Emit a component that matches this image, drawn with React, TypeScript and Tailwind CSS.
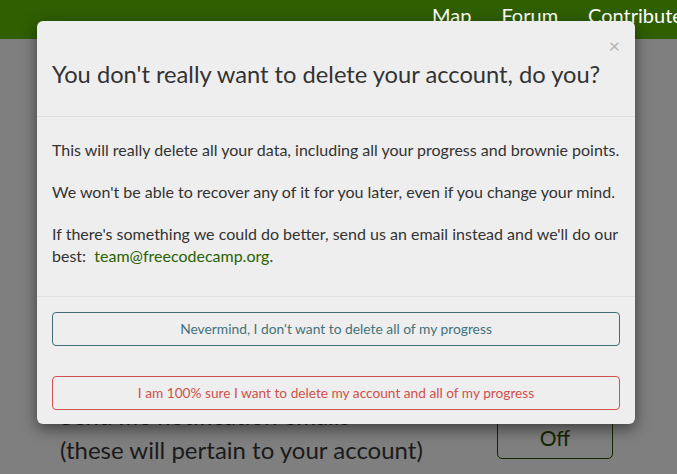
import React from 'react';

const lato = { fontFamily: 'Lato, "Open Sans", sans-serif' };

function NavBar() {
  return (
    <div className="h-[39px] bg-[#2f5f00] overflow-hidden">
      <nav className="flex gap-[30px] pl-[432px] pt-[1px] text-[20px] leading-[28px] text-white whitespace-nowrap">
        <span>Map</span>
        <span>Forum</span>
        <span>Contribute</span>
      </nav>
    </div>
  );
}

function Backdrop() {
  return (
    <div className="flex items-start justify-between pl-[60px] pr-[64px] pt-[360px]">
      <div className="text-[24px] leading-[34px] text-[#1a1a1a]">
        <p>Send me notification emails</p>
        <p>(these will pertain to your account)</p>
      </div>
      <button className="w-[116px] h-[42px] mt-[18px] border border-[#142600] rounded-[5px] text-[21px] text-[#142600]">
        Off
      </button>
    </div>
  );
}

function DeleteModal() {
  return (
    <div className="absolute left-[37px] top-[21px] w-[598px] bg-[#eeeeee] rounded-[6px] shadow-[0_5px_15px_rgba(0,0,0,0.5)] text-[#333]">
      <div className="relative h-[96px] border-b border-[#e0e0e0] px-[15px] pt-[38px]">
        <span className="absolute right-[15px] top-[14px] text-[20px] leading-none text-[#b5b5b5]">×</span>
        <h3 className="text-[23.7px] leading-[30px] font-normal">
          You don't really want to delete your account, do you?
        </h3>
      </div>
      <div className="px-[15px] pt-[22px] pb-[29px] text-[16px] leading-[22px] space-y-[20px]">
        <p>This will really delete all your data, including all your progress and brownie points.</p>
        <p>We won't be able to recover any of it for you later, even if you change your mind.</p>
        <p>
          If there's something we could do better, send us an email instead and we'll do our best:{'\u00a0 '}
          <a className="text-[#2a6200]">team@freecodecamp.org</a>.
        </p>
      </div>
      <div className="border-t border-[#e0e0e0] px-[15px] pt-[15px] pb-[14px] flex flex-col gap-[30px]">
        <button className="h-[34px] w-full border border-[#3f6f75] rounded-[4px] text-[13.8px] text-[#42727a]">
          Nevermind, I don't want to delete all of my progress
        </button>
        <button className="h-[34px] w-full border border-[#d0504b] rounded-[4px] text-[13.7px] text-[#d0504b]">
          I am 100% sure I want to delete my account and all of my progress
        </button>
      </div>
    </div>
  );
}

export default function App() {
  return (
    <div className="relative w-full h-[474px] overflow-hidden bg-[#7f7f7f]" style={lato}>
      <NavBar />
      <Backdrop />
      <DeleteModal />
    </div>
  );
}
